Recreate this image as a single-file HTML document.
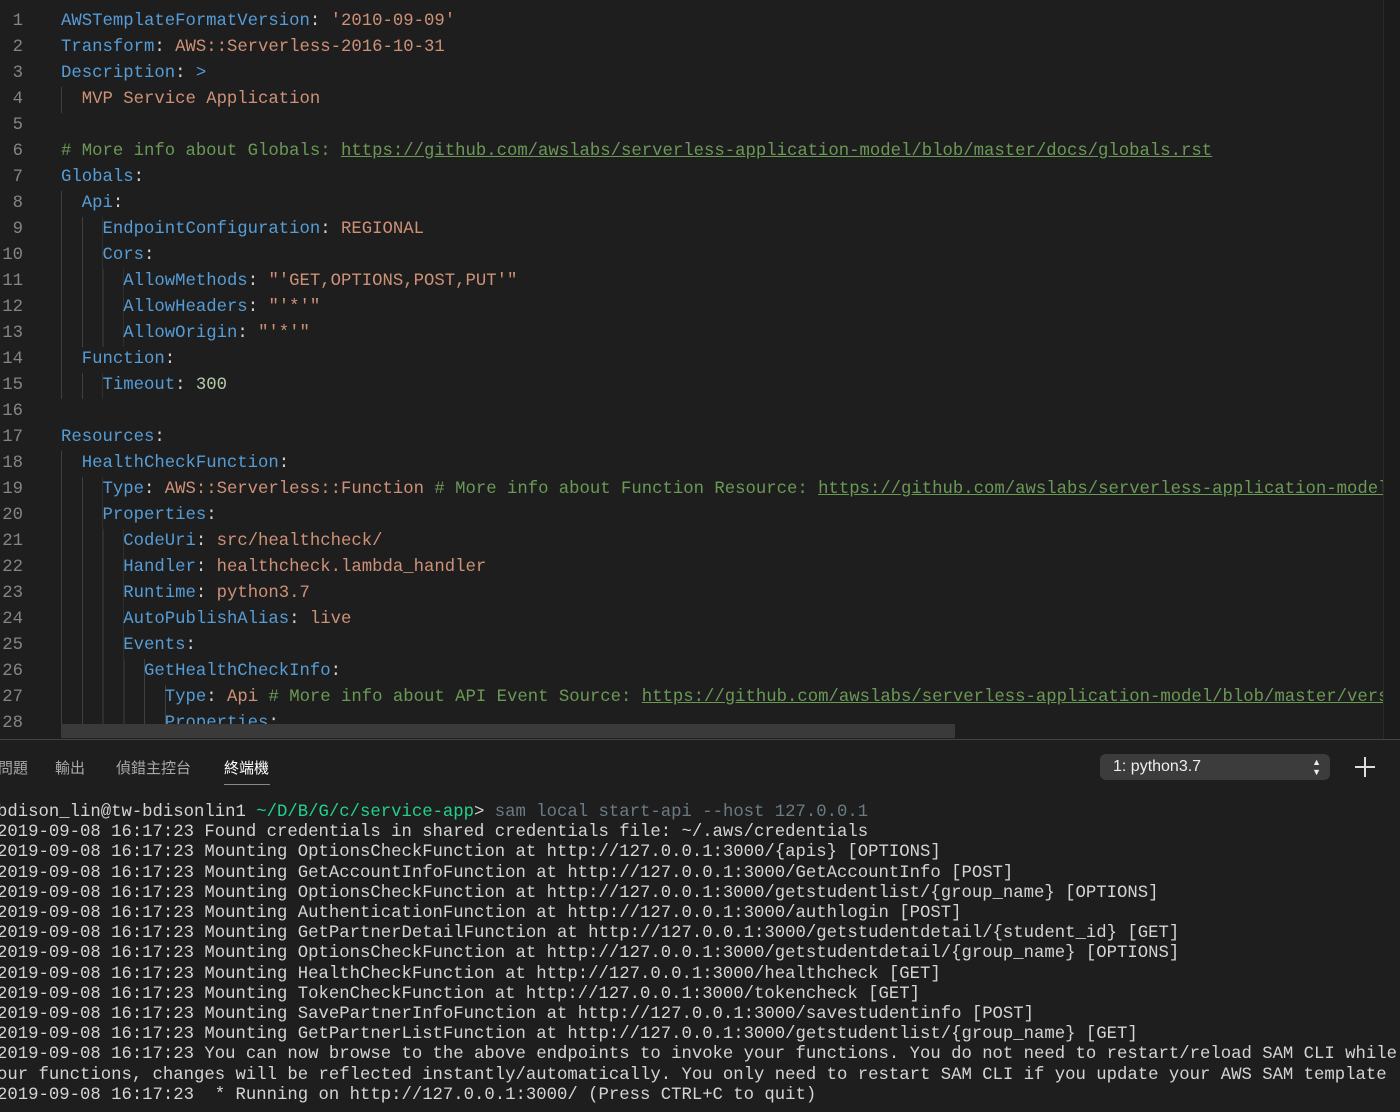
<!DOCTYPE html>
<html><head><meta charset="utf-8"><style>
body{margin:0;width:1400px;height:1111px;background:#1e1e1e;overflow:hidden;position:relative;font-family:"Liberation Mono",monospace}
#ed{position:absolute;left:0;top:0;width:1383px;height:739px;overflow:hidden}
#lines{position:absolute;left:0;top:3px}
.l{position:absolute;left:0;height:26px;line-height:26px;font-size:17.3px;white-space:pre;color:#d4d4d4;width:1383px}
.n{position:absolute;left:0;width:23px;text-align:right;color:#858585}
.c{position:absolute;left:61px}
.g{position:absolute;left:61px;top:0;height:26px;background:repeating-linear-gradient(90deg,#404040 0 1px,transparent 1px 20.8px)}
.k{color:#569cd6}.s{color:#ce9178}.m{color:#6a9955}.u{color:#6a9955;text-decoration:underline}.d{color:#b5cea8}
#mini{position:absolute;left:1383px;top:0;width:17px;height:739px;background:#1b1b1b;border-left:1px solid #2a2a2a}
#sb{position:absolute;left:61px;top:724px;width:894px;height:14px;background:#3a3a3a}
#panel{position:absolute;left:0;top:739px;width:1400px;height:372px;border-top:1px solid #444}
.tab{position:absolute;top:17px;font-family:"Liberation Sans","Noto Sans CJK TC",sans-serif;font-size:15px;color:#a8a8a8}
#term{position:absolute;left:-3px;top:63px;font-size:17.3px;line-height:20.2px;white-space:pre;color:#d4d4d4}
</style></head><body>
<div id="ed">
<div id="lines">
<div class="l" style="top:6px"><span class="n">1</span><span class="c"><span class="k">AWSTemplateFormatVersion</span>: <span class="s">'2010-09-09'</span></span></div>
<div class="l" style="top:32px"><span class="n">2</span><span class="c"><span class="k">Transform</span>: <span class="s">AWS::Serverless-2016-10-31</span></span></div>
<div class="l" style="top:58px"><span class="n">3</span><span class="c"><span class="k">Description</span>: <span class="k">&gt;</span></span></div>
<div class="l" style="top:84px"><span class="n">4</span><span class="g" style="width:21px"></span><span class="c">  <span class="s">MVP Service Application</span></span></div>
<div class="l" style="top:110px"><span class="n">5</span></div>
<div class="l" style="top:136px"><span class="n">6</span><span class="c"><span class="m"># More info about Globals: </span><span class="u">https://github.com/awslabs/serverless-application-model/blob/master/docs/globals.rst</span></span></div>
<div class="l" style="top:162px"><span class="n">7</span><span class="c"><span class="k">Globals</span>:</span></div>
<div class="l" style="top:188px"><span class="n">8</span><span class="g" style="width:21px"></span><span class="c">  <span class="k">Api</span>:</span></div>
<div class="l" style="top:214px"><span class="n">9</span><span class="g" style="width:42px"></span><span class="c">    <span class="k">EndpointConfiguration</span>: <span class="s">REGIONAL</span></span></div>
<div class="l" style="top:240px"><span class="n">10</span><span class="g" style="width:42px"></span><span class="c">    <span class="k">Cors</span>:</span></div>
<div class="l" style="top:266px"><span class="n">11</span><span class="g" style="width:63px"></span><span class="c">      <span class="k">AllowMethods</span>: <span class="s">"'GET,OPTIONS,POST,PUT'"</span></span></div>
<div class="l" style="top:292px"><span class="n">12</span><span class="g" style="width:63px"></span><span class="c">      <span class="k">AllowHeaders</span>: <span class="s">"'*'"</span></span></div>
<div class="l" style="top:318px"><span class="n">13</span><span class="g" style="width:63px"></span><span class="c">      <span class="k">AllowOrigin</span>: <span class="s">"'*'"</span></span></div>
<div class="l" style="top:344px"><span class="n">14</span><span class="g" style="width:21px"></span><span class="c">  <span class="k">Function</span>:</span></div>
<div class="l" style="top:370px"><span class="n">15</span><span class="g" style="width:42px"></span><span class="c">    <span class="k">Timeout</span>: <span class="d">300</span></span></div>
<div class="l" style="top:396px"><span class="n">16</span></div>
<div class="l" style="top:422px"><span class="n">17</span><span class="c"><span class="k">Resources</span>:</span></div>
<div class="l" style="top:448px"><span class="n">18</span><span class="g" style="width:21px"></span><span class="c">  <span class="k">HealthCheckFunction</span>:</span></div>
<div class="l" style="top:474px"><span class="n">19</span><span class="g" style="width:42px"></span><span class="c">    <span class="k">Type</span>: <span class="s">AWS::Serverless::Function</span> <span class="m"># More info about Function Resource: </span><span class="u">https://github.com/awslabs/serverless-application-model/blob/master/versions</span></span></div>
<div class="l" style="top:500px"><span class="n">20</span><span class="g" style="width:42px"></span><span class="c">    <span class="k">Properties</span>:</span></div>
<div class="l" style="top:526px"><span class="n">21</span><span class="g" style="width:63px"></span><span class="c">      <span class="k">CodeUri</span>: <span class="s">src/healthcheck/</span></span></div>
<div class="l" style="top:552px"><span class="n">22</span><span class="g" style="width:63px"></span><span class="c">      <span class="k">Handler</span>: <span class="s">healthcheck.lambda_handler</span></span></div>
<div class="l" style="top:578px"><span class="n">23</span><span class="g" style="width:63px"></span><span class="c">      <span class="k">Runtime</span>: <span class="s">python3.7</span></span></div>
<div class="l" style="top:604px"><span class="n">24</span><span class="g" style="width:63px"></span><span class="c">      <span class="k">AutoPublishAlias</span>: <span class="s">live</span></span></div>
<div class="l" style="top:630px"><span class="n">25</span><span class="g" style="width:63px"></span><span class="c">      <span class="k">Events</span>:</span></div>
<div class="l" style="top:656px"><span class="n">26</span><span class="g" style="width:84px"></span><span class="c">        <span class="k">GetHealthCheckInfo</span>:</span></div>
<div class="l" style="top:682px"><span class="n">27</span><span class="g" style="width:105px"></span><span class="c">          <span class="k">Type</span>: <span class="s">Api</span> <span class="m"># More info about API Event Source: </span><span class="u">https://github.com/awslabs/serverless-application-model/blob/master/versions</span></span></div>
<div class="l" style="top:708px"><span class="n">28</span><span class="g" style="width:105px"></span><span class="c">          <span class="k">Properties</span>:</span></div>
</div>
<div id="sb"></div>
</div>
<div id="mini"></div>
<div id="panel">
<span class="tab" style="left:-2px">問題</span>
<span class="tab" style="left:55px">輸出</span>
<span class="tab" style="left:116px">偵錯主控台</span>
<span class="tab" style="left:224px;color:#fff">終端機</span>
<div style="position:absolute;left:224px;top:44px;width:46px;height:1px;background:#888"></div>
<div style="position:absolute;left:1100px;top:14px;width:230px;height:26px;background:#3c3c3c;border-radius:6px;font-family:'Liberation Sans',sans-serif;font-size:16px;color:#eee;line-height:26px;padding-left:13px;box-sizing:border-box">1: python3.7<span style="position:absolute;right:9px;top:0;font-size:9px;line-height:10px;padding-top:3px">▲<br>▼</span></div>
<div style="position:absolute;left:1355px;top:26px;width:20px;height:1.5px;background:#ddd"></div>
<div style="position:absolute;left:1364px;top:17px;width:1.5px;height:20px;background:#ddd"></div>
<div id="term">bdison_lin@tw-bdisonlin1 <span style="color:#23d18b">~/D/B/G/c/service-app</span>&gt; <span style="color:#6b7b84">sam local start-api --host 127.0.0.1</span>
2019-09-08 16:17:23 Found credentials in shared credentials file: ~/.aws/credentials
2019-09-08 16:17:23 Mounting OptionsCheckFunction at http://127.0.0.1:3000/{apis} [OPTIONS]
2019-09-08 16:17:23 Mounting GetAccountInfoFunction at http://127.0.0.1:3000/GetAccountInfo [POST]
2019-09-08 16:17:23 Mounting OptionsCheckFunction at http://127.0.0.1:3000/getstudentlist/{group_name} [OPTIONS]
2019-09-08 16:17:23 Mounting AuthenticationFunction at http://127.0.0.1:3000/authlogin [POST]
2019-09-08 16:17:23 Mounting GetPartnerDetailFunction at http://127.0.0.1:3000/getstudentdetail/{student_id} [GET]
2019-09-08 16:17:23 Mounting OptionsCheckFunction at http://127.0.0.1:3000/getstudentdetail/{group_name} [OPTIONS]
2019-09-08 16:17:23 Mounting HealthCheckFunction at http://127.0.0.1:3000/healthcheck [GET]
2019-09-08 16:17:23 Mounting TokenCheckFunction at http://127.0.0.1:3000/tokencheck [GET]
2019-09-08 16:17:23 Mounting SavePartnerInfoFunction at http://127.0.0.1:3000/savestudentinfo [POST]
2019-09-08 16:17:23 Mounting GetPartnerListFunction at http://127.0.0.1:3000/getstudentlist/{group_name} [GET]
2019-09-08 16:17:23 You can now browse to the above endpoints to invoke your functions. You do not need to restart/reload SAM CLI while
our functions, changes will be reflected instantly/automatically. You only need to restart SAM CLI if you update your AWS SAM template
2019-09-08 16:17:23  * Running on http://127.0.0.1:3000/ (Press CTRL+C to quit)</div>
</div>
</body></html>
